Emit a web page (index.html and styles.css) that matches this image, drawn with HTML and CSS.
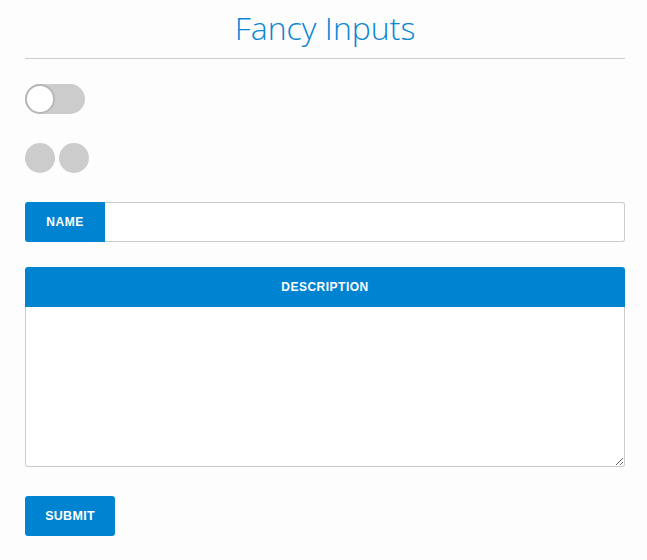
FILE: index.html
```html
<!DOCTYPE html>
<html>
<head>
<meta charset="utf-8">
<link rel="stylesheet" href="styles.css">
</head>
<body>
<div class="page">
  <h1 class="title">Fancy Inputs</h1>
  <div class="row">
    <label class="toggle"><span class="knob"></span></label>
  </div>
  <div class="row dots">
    <span class="dot"></span><span class="dot"></span>
  </div>
  <div class="field">
    <span class="label">NAME</span>
    <input class="text" type="text">
  </div>
  <div class="area">
    <div class="area-head">DESCRIPTION</div>
    <textarea class="area-box"></textarea>
  </div>
  <button class="submit">SUBMIT</button>
</div>
</body>
</html>
```
FILE: styles.css
```css
html, body { margin: 0; padding: 0; background: #fdfdfd; }
.page { padding: 0 22px 0 25px; font-family: "Liberation Sans", Arial, sans-serif; }
.title {
  margin: 0;
  padding: 7px 0 9px;
  text-align: center;
  font-family: "Open Sans", sans-serif;
  font-weight: 300;
  font-size: 32px;
  line-height: 42px;
  color: #0a86d3;
  border-bottom: 1px solid #cccccc;
}
.row { display: flex; }
.toggle {
  margin-top: 25px;
  width: 60px; height: 30px;
  border-radius: 15px;
  background: #cccccc;
  position: relative;
  display: block;
}
.knob {
  position: absolute;
  left: 0; top: 0;
  width: 26px; height: 26px;
  border-radius: 50%;
  background: #fff;
  border: 2px solid #b8b8b8;
}
.dots { margin-top: 29px; gap: 4px; }
.dot { width: 30px; height: 30px; border-radius: 50%; background: #cccccc; }
.field {
  margin-top: 29px;
  display: flex;
  height: 40px;
}
.label {
  width: 80px;
  background: #0084d2;
  color: #fff;
  font-weight: bold;
  font-size: 12px;
  letter-spacing: 0.5px;
  display: flex; align-items: center; justify-content: center;
  border-radius: 3px 0 0 3px;
}
.text {
  flex: 1;
  margin: 0;
  border: 1px solid #cccccc;
  border-left: none;
  border-radius: 0 3px 3px 0;
  background: #fff;
  outline: none;
  padding: 0 10px;
}
.area { margin-top: 25px; display: flex; flex-direction: column; }
.area-head {
  height: 40px;
  background: #0084d2;
  color: #fff;
  font-weight: bold;
  font-size: 12px;
  letter-spacing: 0.5px;
  display: flex; align-items: center; justify-content: center;
  border-radius: 3px 3px 0 0;
}
.area-box {
  margin: 0;
  height: 160px;
  box-sizing: border-box;
  border: 1px solid #cccccc;
  border-top: none;
  border-radius: 0 0 3px 3px;
  background: #fff;
  outline: none;
  resize: vertical;
}
.submit {
  margin-top: 29px;
  width: 90px; height: 40px;
  border: none;
  border-radius: 3px;
  background: #0084d2;
  color: #fff;
  font-family: "Liberation Sans", Arial, sans-serif;
  font-weight: bold;
  font-size: 12.5px;
  letter-spacing: 0.3px;
  cursor: pointer;
}
```
